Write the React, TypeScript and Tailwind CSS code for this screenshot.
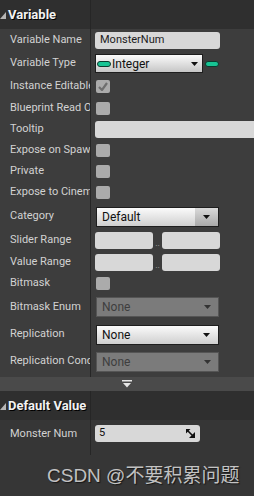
import React from "react";

const labelCls =
  "w-[91px] shrink-0 h-full flex items-center pl-[10px] border-r border-[#262626] overflow-hidden whitespace-nowrap text-[11px] text-[#d2d2d2]";

function Row({ label, h, children }: { label: string; h: string; children?: React.ReactNode }) {
  return (
    <div className={`flex items-center ${h}`}>
      <div className={labelCls}>{label}</div>
      <div className="flex items-center pl-[4px] h-full">{children}</div>
    </div>
  );
}

function Check({ checked }: { checked?: boolean }) {
  return (
    <div className="w-[14px] h-[13px] ml-[1px] rounded-[2px] bg-[#ababab] flex items-center justify-center">
      {checked && (
        <svg width="10" height="9" viewBox="0 0 10 9">
          <path d="M1 5 L4 8 L9 1" stroke="#6e6e6e" strokeWidth="2.2" fill="none" />
        </svg>
      )}
    </div>
  );
}

function Input({ w, value }: { w: string; value?: string }) {
  return (
    <div className={`${w} h-[17px] rounded-[3px] bg-[#d8d8d8] flex items-center px-[5px] text-[11px] text-[#1c1c1c]`}>
      {value}
    </div>
  );
}

function Arrow({ color = "#111" }: { color?: string }) {
  return (
    <svg width="7" height="4" viewBox="0 0 7 4">
      <path d="M0 0 H7 L3.5 4 Z" fill={color} />
    </svg>
  );
}

function Pin() {
  return <div className="w-[14px] h-[6px] rounded-full bg-[#17c494] border border-[#0b3b2e]" />;
}

function Combo({ text, disabled, split }: { text: string; disabled?: boolean; split?: boolean }) {
  if (disabled) {
    return (
      <div className="w-[123px] h-[20px] ml-[1px] border border-[#555] bg-[#7b7b7b] flex items-center justify-between pl-[5px] pr-[7px] text-[12px] text-[#3e3e3e]">
        <span>{text}</span>
        <Arrow color="#333" />
      </div>
    );
  }
  return (
    <div className="w-[123px] h-[20px] ml-[1px] border border-[#1e1e1e] bg-gradient-to-b from-[#fbfbfb] to-[#cfcfcf] flex items-center justify-between text-[12px] text-[#111]">
      <span className="pl-[5px]">{text}</span>
      <div
        className={`h-full flex items-center justify-center w-[23px] ${
          split ? "bg-gradient-to-b from-[#dadada] to-[#a9a9a9]" : ""
        }`}
      >
        <Arrow />
      </div>
    </div>
  );
}

function Header({ title }: { title: string }) {
  return (
    <div className="flex h-[29px] bg-[#2f2f2f]">
      <div className="w-[91px] shrink-0 flex items-center border-r border-[#262626]">
        <svg width="6" height="7" viewBox="0 0 6 7" className="ml-[0px] mt-[2px]">
          <path d="M6 0 V7 H0 Z" fill="#b5b5b5" />
        </svg>
        <span className="ml-[2px] text-[13px] font-bold text-[#f2f2f2] [text-shadow:1px_1px_0_#000]">{title}</span>
      </div>
    </div>
  );
}

export default function App() {
  return (
    <div
      className="w-[254px] h-[496px] bg-[#363636] overflow-hidden relative"
      style={{ fontFamily: "Roboto, 'Noto Sans', sans-serif" }}
    >
      <Header title="Variable" />
      <div className="bg-[#3d3d3d]">
        <Row label="Variable Name" h="h-[23px]">
          <Input w="w-[125px]" value="MonsterNum" />
        </Row>
        <Row label="Variable Type" h="h-[23px]">
          <div className="w-[108px] h-[19px] border border-[#1e1e1e] bg-gradient-to-b from-[#fbfbfb] to-[#c6c6c6] flex items-center text-[12px] text-[#111]">
            <div className="ml-[1px]">
              <Pin />
            </div>
            <span className="ml-[1px]">Integer</span>
            <div className="ml-auto mr-[4px]">
              <Arrow />
            </div>
          </div>
          <div className="ml-[2px]">
            <Pin />
          </div>
        </Row>
        <Row label="Instance Editable" h="h-[23px]">
          <Check checked />
        </Row>
        <Row label="Blueprint Read Only" h="h-[21px]">
          <Check />
        </Row>
        <Row label="Tooltip" h="h-[21px]">
          <Input w="w-[170px]" />
        </Row>
        <Row label="Expose on Spawn" h="h-[21px]">
          <Check />
        </Row>
        <Row label="Private" h="h-[21px]">
          <Check />
        </Row>
        <Row label="Expose to Cinematics" h="h-[21px]">
          <Check />
        </Row>
        <Row label="Category" h="h-[27px]">
          <Combo text="Default" split />
        </Row>
        <Row label="Slider Range" h="h-[21px]">
          <Input w="w-[58px]" />
          <span className="w-[9px] text-center text-[9px] text-[#aaa] leading-none mt-[6px]">..</span>
          <Input w="w-[58px]" />
        </Row>
        <Row label="Value Range" h="h-[23px]">
          <Input w="w-[58px]" />
          <span className="w-[9px] text-center text-[9px] text-[#aaa] leading-none mt-[6px]">..</span>
          <Input w="w-[58px]" />
        </Row>
        <Row label="Bitmask" h="h-[19px]">
          <Check />
        </Row>
        <Row label="Bitmask Enum" h="h-[28px]">
          <Combo text="None" disabled />
        </Row>
        <Row label="Replication" h="h-[27px]">
          <Combo text="None" />
        </Row>
        <Row label="Replication Condition" h="h-[27px]">
          <Combo text="None" disabled />
        </Row>
        <div className="h-[2px] flex">
          <div className="w-[91px] border-r border-[#262626]" />
        </div>
      </div>
      <div className="h-[14px] bg-[#4a4a4a] flex items-center justify-center">
        <svg width="10" height="8" viewBox="0 0 10 8">
          <rect x="0" y="0" width="10" height="1.5" fill="#e6e6e6" />
          <path d="M1 3 H9 L5 7.5 Z" fill="#e6e6e6" />
        </svg>
      </div>
      <Header title="Default Value" />
      <div className="flex h-[35px]">
        <div className="w-[91px] shrink-0 h-full pl-[10px] pt-[6px] border-r border-[#262626] text-[11px] text-[#d2d2d2] whitespace-nowrap overflow-hidden">
          Monster Num
        </div>
        <div className="pl-[4px] pt-[5px]">
          <div className="w-[105px] h-[17px] rounded-[3px] bg-[#d8d8d8] flex items-center justify-between pl-[4px] pr-[5px] text-[11px] text-[#111]">
            <span>5</span>
            <svg width="9" height="9" viewBox="0 0 9 9">
              <path d="M0 0 H4.5 L0 4.5 Z" fill="#111" />
              <path d="M9 9 H3 L9 3 Z" fill="#111" />
              <path d="M1 1 L7 7" stroke="#111" strokeWidth="1.6" />
            </svg>
          </div>
        </div>
      </div>
      <div className="absolute left-[47px] top-[465px] text-[19px] leading-[22px] text-[rgba(255,255,255,0.72)] [text-shadow:1px_1px_1px_rgba(0,0,0,0.6)] whitespace-nowrap" style={{ fontFamily: "'Liberation Sans', 'Noto Sans CJK SC', sans-serif" }}>
        CSDN @不要积累问题
      </div>
    </div>
  );
}
